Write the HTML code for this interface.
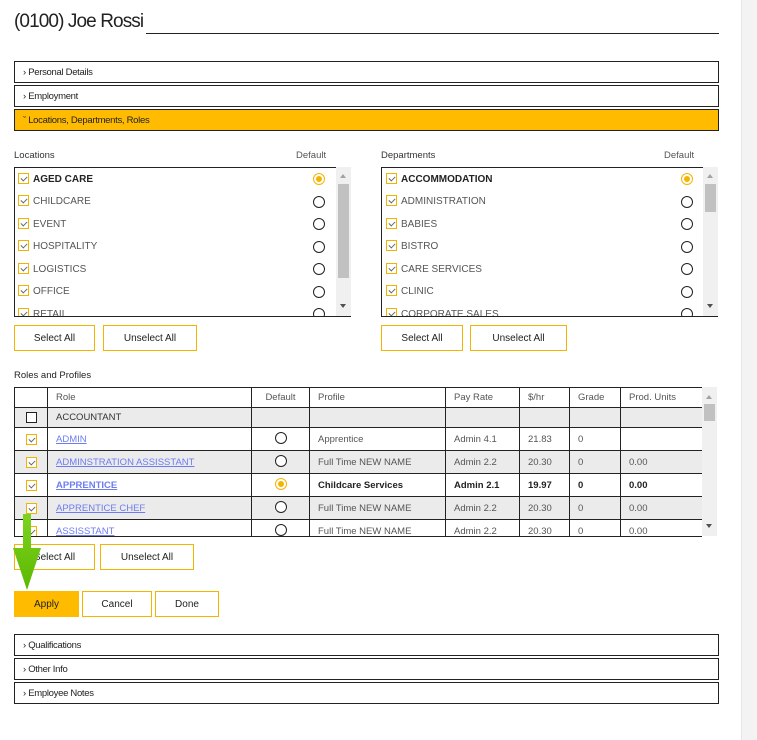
<!DOCTYPE html>
<html><head><meta charset="utf-8"><style>
*{box-sizing:border-box;margin:0;padding:0}
body{width:757px;height:740px;position:relative;background:#fff;font-family:"Liberation Sans",sans-serif;color:#333;overflow:hidden}
.a{position:absolute}
.side{left:741px;top:0;width:16px;height:740px;background:#f3f3f3;border-left:1px solid #e6e6e6}
.title{left:14px;top:11px;font-size:19px;color:#222;letter-spacing:-0.9px}
.uline{left:146px;top:33px;width:573px;height:1px;background:#222}
.pan{left:14px;width:705px;height:22px;border:1px solid #222;font-size:9.5px;color:#222;padding:5px 0 0 8px;letter-spacing:-0.3px}
.pan.on{background:#ffbb00}
.lbl{font-size:9.5px;color:#333}
.box{border:1px solid #222;border-right:none;overflow:hidden;background:#fff}
.it{position:absolute;left:4px;font-size:10px;color:#555;height:12px}
.it b{color:#222}
.cb{position:absolute;width:11px;height:11px;border:1px solid #f0b400;background:#fff}
.cb:after{content:"";position:absolute;left:3px;top:1px;width:3px;height:5px;border:solid #666;border-width:0 1px 1px 0;transform:rotate(45deg)}
.cb.off{border-color:#222}.cb.off:after{display:none}
.rd{position:absolute;width:12px;height:12px;border:1px solid #222;border-radius:50%;background:#fff}
.rd.on{border-color:#f5b400}
.rd.on:after{content:"";position:absolute;left:2px;top:2px;width:6px;height:6px;border-radius:50%;background:#f5b400}
.sb{background:#f0f0f0;width:15px}
.th{position:absolute;left:2px;width:11px;background:#c1c1c1}
.up,.dn{position:absolute;left:4px;width:0;height:0;border-left:3.5px solid transparent;border-right:3.5px solid transparent}
.up{border-bottom:4px solid #a3a3a3}.dn{border-top:4px solid #505050}
.btn{height:26px;border:1px solid #f5b400;background:#fff;font-size:10px;color:#222;text-align:center;line-height:25px}
table{border-collapse:collapse;font-size:9.5px;color:#555}
td{border:1px solid #222;padding:0 0 0 8px;white-space:nowrap;overflow:hidden}
tr.g td{background:#ebebeb}
a{color:#6d7cf0;text-decoration:underline}
tr.bold td{color:#222;font-weight:bold}
</style></head><body>
<div class="a side"></div>
<div class="a title">(0100) Joe Rossi</div>
<div class="a uline"></div>
<div class="a pan" style="top:61px">&#8250; Personal Details</div>
<div class="a pan" style="top:85px">&#8250; Employment</div>
<div class="a pan on" style="top:109px">&#711; Locations, Departments, Roles</div>

<div class="a lbl" style="left:14px;top:150px">Locations</div>
<div class="a lbl" style="left:296px;top:150px;color:#555">Default</div>
<div class="a box" style="left:14px;top:167px;width:322px;height:150px">
 <div class="cb" style="left:3px;top:5px"></div><div class="it" style="left:18px;top:6px"><b style="font-weight:bold">AGED CARE</b></div><div class="rd on" style="left:298px;top:5px"></div>
 <div class="cb" style="left:3px;top:27px"></div><div class="it" style="left:18px;top:28px">CHILDCARE</div><div class="rd" style="left:298px;top:28px"></div>
 <div class="cb" style="left:3px;top:50px"></div><div class="it" style="left:18px;top:51px">EVENT</div><div class="rd" style="left:298px;top:50px"></div>
 <div class="cb" style="left:3px;top:72px"></div><div class="it" style="left:18px;top:73px">HOSPITALITY</div><div class="rd" style="left:298px;top:73px"></div>
 <div class="cb" style="left:3px;top:95px"></div><div class="it" style="left:18px;top:96px">LOGISTICS</div><div class="rd" style="left:298px;top:95px"></div>
 <div class="cb" style="left:3px;top:117px"></div><div class="it" style="left:18px;top:118px">OFFICE</div><div class="rd" style="left:298px;top:118px"></div>
 <div class="cb" style="left:3px;top:140px"></div><div class="it" style="left:18px;top:141px">RETAIL</div><div class="rd" style="left:298px;top:140px"></div>
</div>
<div class="a sb" style="left:336px;top:167px;height:149px"><div class="up" style="top:7px"></div><div class="th" style="top:17px;height:94px"></div><div class="dn" style="top:137px"></div></div>
<div class="a" style="left:14px;top:316px;width:337px;height:1px;background:#222"></div>
<div class="a btn" style="left:14px;top:325px;width:81px">Select All</div>
<div class="a btn" style="left:103px;top:325px;width:94px">Unselect All</div>

<div class="a lbl" style="left:381px;top:150px">Departments</div>
<div class="a lbl" style="left:664px;top:150px;color:#555">Default</div>
<div class="a box" style="left:381px;top:167px;width:322px;height:150px">
 <div class="cb" style="left:4px;top:5px"></div><div class="it" style="left:19px;top:6px"><b style="font-weight:bold">ACCOMMODATION</b></div><div class="rd on" style="left:299px;top:5px"></div>
 <div class="cb" style="left:4px;top:27px"></div><div class="it" style="left:19px;top:28px">ADMINISTRATION</div><div class="rd" style="left:299px;top:28px"></div>
 <div class="cb" style="left:4px;top:50px"></div><div class="it" style="left:19px;top:51px">BABIES</div><div class="rd" style="left:299px;top:50px"></div>
 <div class="cb" style="left:4px;top:72px"></div><div class="it" style="left:19px;top:73px">BISTRO</div><div class="rd" style="left:299px;top:73px"></div>
 <div class="cb" style="left:4px;top:95px"></div><div class="it" style="left:19px;top:96px">CARE SERVICES</div><div class="rd" style="left:299px;top:95px"></div>
 <div class="cb" style="left:4px;top:117px"></div><div class="it" style="left:19px;top:118px">CLINIC</div><div class="rd" style="left:299px;top:118px"></div>
 <div class="cb" style="left:4px;top:140px"></div><div class="it" style="left:19px;top:141px">CORPORATE SALES</div><div class="rd" style="left:299px;top:140px"></div>
</div>
<div class="a sb" style="left:703px;top:167px;height:149px"><div class="up" style="top:7px"></div><div class="th" style="top:17px;height:28px"></div><div class="dn" style="top:137px"></div></div>
<div class="a" style="left:381px;top:316px;width:337px;height:1px;background:#222"></div>
<div class="a btn" style="left:381px;top:325px;width:82px">Select All</div>
<div class="a btn" style="left:470px;top:325px;width:97px">Unselect All</div>

<div class="a lbl" style="left:14px;top:370px;color:#222">Roles and Profiles</div>
<div class="a" style="left:14px;top:387px;width:688px;height:150px;overflow:hidden;border-bottom:1px solid #222">
<table style="width:689px;table-layout:fixed">
<colgroup><col style="width:33px"><col style="width:204px"><col style="width:58px"><col style="width:136px"><col style="width:74px"><col style="width:50px"><col style="width:51px"><col style="width:83px"></colgroup>
<tr style="height:20px"><td></td><td>Role</td><td style="padding:0;text-align:center">Default</td><td>Profile</td><td>Pay Rate</td><td>$/hr</td><td>Grade</td><td>Prod. Units</td></tr>
<tr class="g" style="height:20px"><td style="position:relative"><div class="cb off" style="left:11px;top:4px"></div></td><td style="color:#333">ACCOUNTANT</td><td></td><td></td><td></td><td></td><td></td><td></td></tr>
<tr style="height:23px"><td style="position:relative"><div class="cb" style="left:11px;top:6px"></div></td><td><a>ADMIN</a></td><td style="position:relative"><div class="rd" style="left:23px;top:4px"></div></td><td>Apprentice</td><td>Admin 4.1</td><td>21.83</td><td>0</td><td></td></tr>
<tr class="g" style="height:23px"><td style="position:relative"><div class="cb" style="left:11px;top:6px"></div></td><td><a>ADMINSTRATION ASSISSTANT</a></td><td style="position:relative"><div class="rd" style="left:23px;top:4px"></div></td><td>Full Time NEW NAME</td><td>Admin 2.2</td><td>20.30</td><td>0</td><td>0.00</td></tr>
<tr class="bold" style="height:23px"><td style="position:relative"><div class="cb" style="left:11px;top:6px"></div></td><td><a style="color:#6d7cf0">APPRENTICE</a></td><td style="position:relative"><div class="rd on" style="left:23px;top:4px"></div></td><td>Childcare Services</td><td>Admin 2.1</td><td>19.97</td><td>0</td><td>0.00</td></tr>
<tr class="g" style="height:23px"><td style="position:relative"><div class="cb" style="left:11px;top:6px"></div></td><td><a>APPRENTICE CHEF</a></td><td style="position:relative"><div class="rd" style="left:23px;top:4px"></div></td><td>Full Time NEW NAME</td><td>Admin 2.2</td><td>20.30</td><td>0</td><td>0.00</td></tr>
<tr style="height:23px"><td style="position:relative"><div class="cb" style="left:11px;top:6px"></div></td><td><a>ASSISSTANT</a></td><td style="position:relative"><div class="rd" style="left:23px;top:4px"></div></td><td>Full Time NEW NAME</td><td>Admin 2.2</td><td>20.30</td><td>0</td><td>0.00</td></tr>
</table></div>
<div class="a sb" style="left:702px;top:387px;height:149px"><div class="up" style="top:8px"></div><div class="th" style="top:17px;height:17px"></div><div class="dn" style="top:137px"></div></div>

<div class="a btn" style="left:14px;top:544px;width:81px">Select All</div>
<div class="a btn" style="left:100px;top:544px;width:94px">Unselect All</div>

<div class="a btn" style="left:14px;top:591px;width:65px;background:#ffbb00;border-color:#ffbb00">Apply</div>
<div class="a btn" style="left:82px;top:591px;width:70px">Cancel</div>
<div class="a btn" style="left:155px;top:591px;width:64px">Done</div>

<svg class="a" style="left:10px;top:512px" width="36" height="82" viewBox="0 0 36 82">
<defs><linearGradient id="g" x1="0" y1="0" x2="0" y2="1"><stop offset="0" stop-color="#7ed321"/><stop offset="1" stop-color="#5cb800"/></linearGradient></defs>
<path d="M13 2 H21 V36 H31 L17 78 L3 36 H13 Z" fill="url(#g)"/>
</svg>

<div class="a pan" style="top:634px">&#8250; Qualifications</div>
<div class="a pan" style="top:658px">&#8250; Other Info</div>
<div class="a pan" style="top:682px">&#8250; Employee Notes</div>
</body></html>
